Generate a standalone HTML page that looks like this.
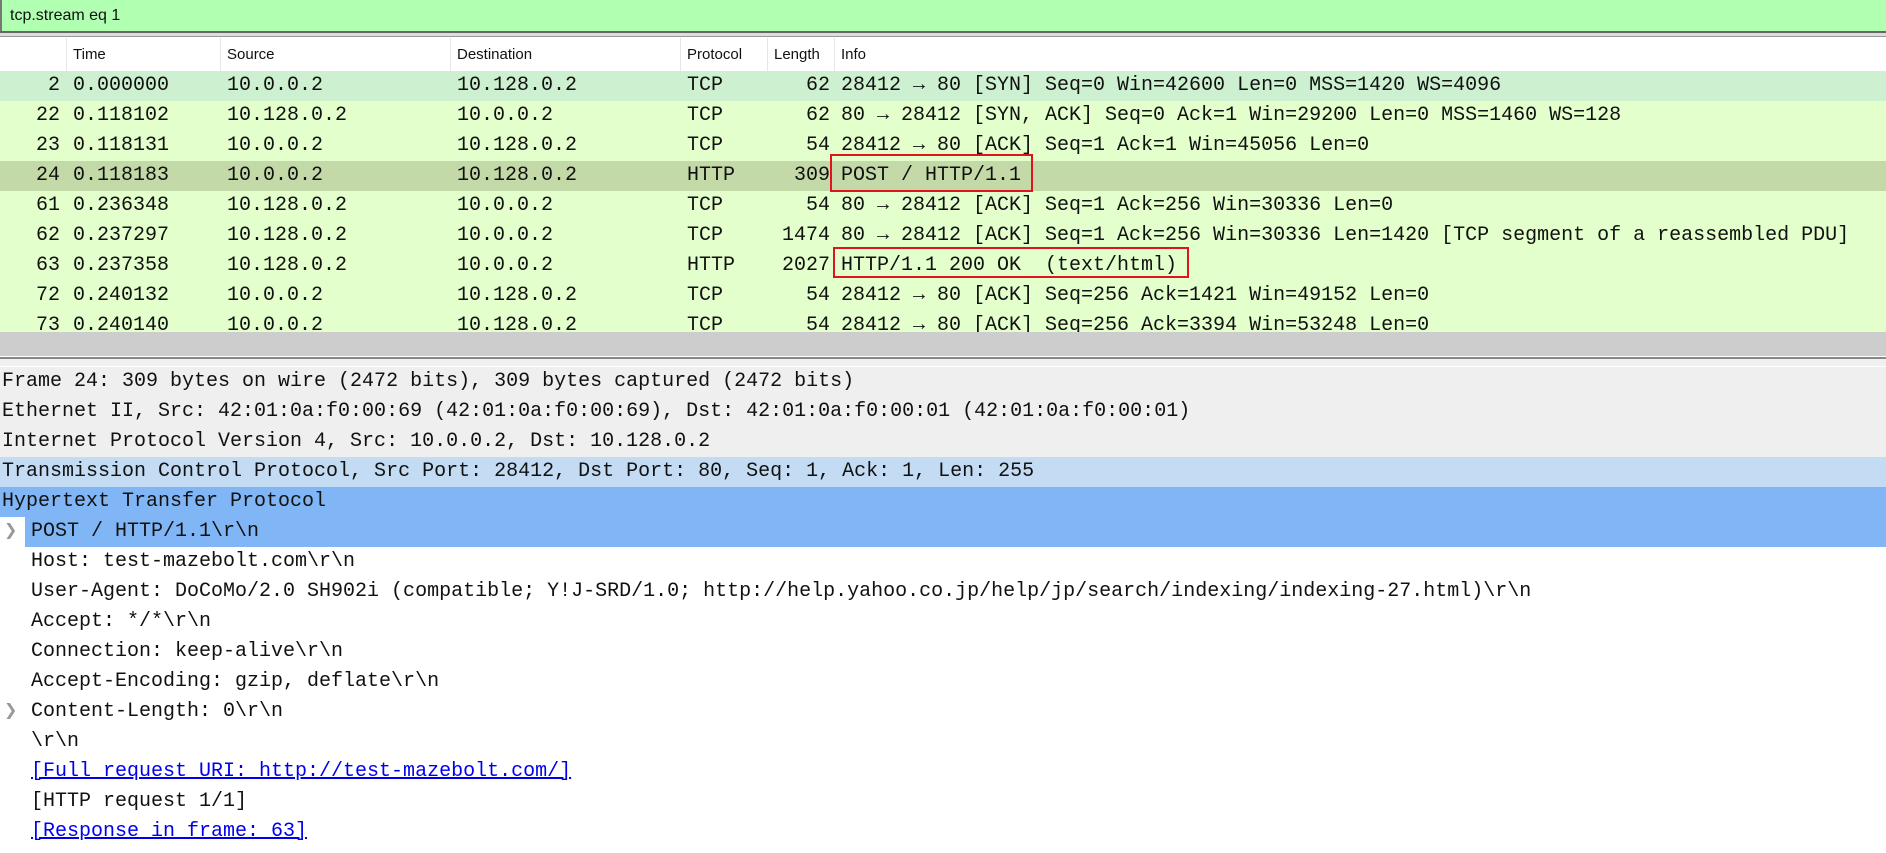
<!DOCTYPE html>
<html><head><style>
*{margin:0;padding:0;box-sizing:border-box}
body{width:1886px;height:853px;overflow:hidden;background:#fff;position:relative;font-family:"Liberation Mono",monospace;font-size:20px;color:#111}
.filter{position:absolute;left:0;top:0;width:1886px;height:31px;background:#b1ffb1;border-left:2px solid #777;font-family:"Liberation Sans",sans-serif;font-size:16px;line-height:31px;padding-left:8px}
.l1{position:absolute;left:0;top:31px;width:1886px;height:2px;background:#666}
.l2{position:absolute;left:0;top:33px;width:1886px;height:4px;background:#ddd;border-bottom:1px solid #999}
.hdr{position:absolute;top:38px;height:33px;left:0;width:1886px;font-family:"Liberation Sans",sans-serif;font-size:15px;line-height:33px}
.hdr span{position:absolute;top:0;height:33px;border-left:1px solid #e6e6e6;padding-left:6px}
.row{position:absolute;left:0;width:1886px;height:30px;line-height:30px;white-space:pre}
.row span{position:absolute;top:0}
.box{position:absolute;border:2px solid #e0141e}
.scroll{position:absolute;left:0;top:332px;width:1886px;height:24px;background:#cdcdcd}
.sep{position:absolute;left:0;top:357px;width:1886px;height:2px;background:#888}
.sep2{position:absolute;left:0;top:359px;width:1886px;height:7px;background:#f0f0f0}
.d{position:absolute;left:0;width:1886px;height:30px;line-height:30px;white-space:pre;padding-left:2px}
.c{padding-left:31px}
a{color:#0000ee;text-decoration:underline}
.arr{position:absolute;left:4px;color:#999;font-family:"DejaVu Sans",sans-serif;font-size:16px;font-weight:bold}
</style></head><body>
<div class="filter">tcp.stream eq 1</div>
<div class="l1"></div><div class="l2"></div>
<div class="hdr">
<span style="left:66px">Time</span>
<span style="left:220px">Source</span>
<span style="left:450px">Destination</span>
<span style="left:680px">Protocol</span>
<span style="left:767px">Length</span>
<span style="left:834px">Info</span>
</div>

<div class="row" style="top:71px;background:#cdf1d0"><span style="left:0;width:60px;text-align:right">2</span><span style="left:73px">0.000000</span><span style="left:227px">10.0.0.2</span><span style="left:457px">10.128.0.2</span><span style="left:687px">TCP</span><span style="left:760px;width:70px;text-align:right">62</span><span style="left:841px">28412 → 80 [SYN] Seq=0 Win=42600 Len=0 MSS=1420 WS=4096</span></div>
<div class="row" style="top:101px;background:#e3ffcb"><span style="left:0;width:60px;text-align:right">22</span><span style="left:73px">0.118102</span><span style="left:227px">10.128.0.2</span><span style="left:457px">10.0.0.2</span><span style="left:687px">TCP</span><span style="left:760px;width:70px;text-align:right">62</span><span style="left:841px">80 → 28412 [SYN, ACK] Seq=0 Ack=1 Win=29200 Len=0 MSS=1460 WS=128</span></div>
<div class="row" style="top:131px;background:#e3ffcb"><span style="left:0;width:60px;text-align:right">23</span><span style="left:73px">0.118131</span><span style="left:227px">10.0.0.2</span><span style="left:457px">10.128.0.2</span><span style="left:687px">TCP</span><span style="left:760px;width:70px;text-align:right">54</span><span style="left:841px">28412 → 80 [ACK] Seq=1 Ack=1 Win=45056 Len=0</span></div>
<div class="row" style="top:161px;background:#c4d9a8"><span style="left:0;width:60px;text-align:right">24</span><span style="left:73px">0.118183</span><span style="left:227px">10.0.0.2</span><span style="left:457px">10.128.0.2</span><span style="left:687px">HTTP</span><span style="left:760px;width:70px;text-align:right">309</span><span style="left:841px">POST / HTTP/1.1</span></div>
<div class="row" style="top:191px;background:#e3ffcb"><span style="left:0;width:60px;text-align:right">61</span><span style="left:73px">0.236348</span><span style="left:227px">10.128.0.2</span><span style="left:457px">10.0.0.2</span><span style="left:687px">TCP</span><span style="left:760px;width:70px;text-align:right">54</span><span style="left:841px">80 → 28412 [ACK] Seq=1 Ack=256 Win=30336 Len=0</span></div>
<div class="row" style="top:221px;background:#e3ffcb"><span style="left:0;width:60px;text-align:right">62</span><span style="left:73px">0.237297</span><span style="left:227px">10.128.0.2</span><span style="left:457px">10.0.0.2</span><span style="left:687px">TCP</span><span style="left:760px;width:70px;text-align:right">1474</span><span style="left:841px">80 → 28412 [ACK] Seq=1 Ack=256 Win=30336 Len=1420 [TCP segment of a reassembled PDU]</span></div>
<div class="row" style="top:251px;background:#e3ffcb"><span style="left:0;width:60px;text-align:right">63</span><span style="left:73px">0.237358</span><span style="left:227px">10.128.0.2</span><span style="left:457px">10.0.0.2</span><span style="left:687px">HTTP</span><span style="left:760px;width:70px;text-align:right">2027</span><span style="left:841px">HTTP/1.1 200 OK  (text/html)</span></div>
<div class="row" style="top:281px;background:#e3ffcb"><span style="left:0;width:60px;text-align:right">72</span><span style="left:73px">0.240132</span><span style="left:227px">10.0.0.2</span><span style="left:457px">10.128.0.2</span><span style="left:687px">TCP</span><span style="left:760px;width:70px;text-align:right">54</span><span style="left:841px">28412 → 80 [ACK] Seq=256 Ack=1421 Win=49152 Len=0</span></div>
<div class="row" style="top:311px;background:#e3ffcb;height:21px;overflow:hidden"><span style="left:0;width:60px;text-align:right">73</span><span style="left:73px">0.240140</span><span style="left:227px">10.0.0.2</span><span style="left:457px">10.128.0.2</span><span style="left:687px">TCP</span><span style="left:760px;width:70px;text-align:right">54</span><span style="left:841px">28412 → 80 [ACK] Seq=256 Ack=3394 Win=53248 Len=0</span></div>
<div class="box" style="left:830px;top:154px;width:203px;height:38px"></div>
<div class="box" style="left:833px;top:247px;width:356px;height:31px"></div>

<div class="scroll"></div>
<div class="sep"></div><div class="sep2"></div>

<div class="d" style="top:367px;background:#efefef">Frame 24: 309 bytes on wire (2472 bits), 309 bytes captured (2472 bits)</div>
<div class="d" style="top:397px;background:#efefef">Ethernet II, Src: 42:01:0a:f0:00:69 (42:01:0a:f0:00:69), Dst: 42:01:0a:f0:00:01 (42:01:0a:f0:00:01)</div>
<div class="d" style="top:427px;background:#efefef">Internet Protocol Version 4, Src: 10.0.0.2, Dst: 10.128.0.2</div>
<div class="d" style="top:457px;background:#c3dcf3">Transmission Control Protocol, Src Port: 28412, Dst Port: 80, Seq: 1, Ack: 1, Len: 255</div>
<div class="d" style="top:487px;background:#80b6f5">Hypertext Transfer Protocol</div>
<div class="d" style="top:517px;background:#80b6f5;left:25px;width:1861px;padding-left:6px">POST / HTTP/1.1\r\n</div>
<span class="arr" style="top:520px">❯</span>
<div class="d c" style="top:547px">Host: test-mazebolt.com\r\n</div>
<div class="d c" style="top:577px">User-Agent: DoCoMo/2.0 SH902i (compatible; Y!J-SRD/1.0; http://help.yahoo.co.jp/help/jp/search/indexing/indexing-27.html)\r\n</div>
<div class="d c" style="top:607px">Accept: */*\r\n</div>
<div class="d c" style="top:637px">Connection: keep-alive\r\n</div>
<div class="d c" style="top:667px">Accept-Encoding: gzip, deflate\r\n</div>
<div class="d c" style="top:697px">Content-Length: 0\r\n</div>
<span class="arr" style="top:700px">❯</span>
<div class="d c" style="top:727px">\r\n</div>
<div class="d c" style="top:757px"><a>[Full request URI: http://test-mazebolt.com/]</a></div>
<div class="d c" style="top:787px">[HTTP request 1/1]</div>
<div class="d c" style="top:817px"><a>[Response in frame: 63]</a></div>
</body></html>
